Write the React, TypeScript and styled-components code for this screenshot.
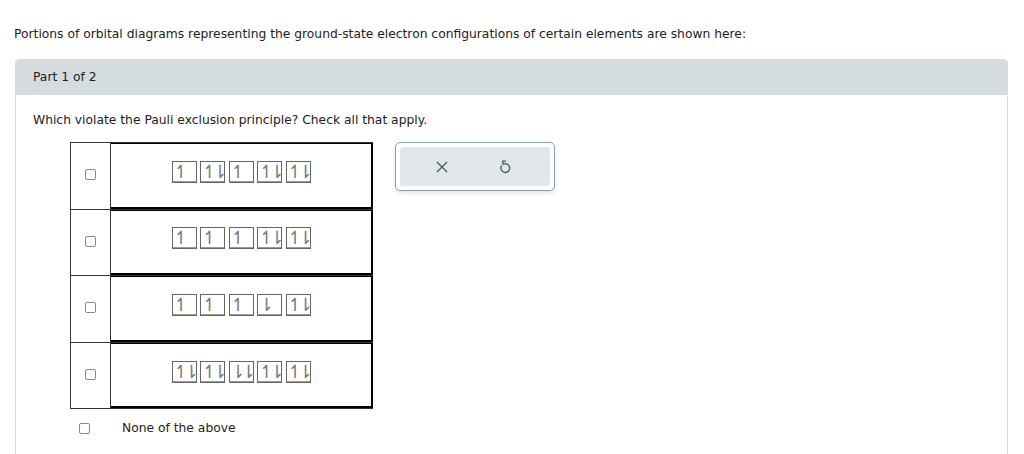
import React from "react";
import styled, { createGlobalStyle } from "styled-components";

const Global = createGlobalStyle`
  html, body { margin: 0; padding: 0; background: #fff; }
  body { font-family: "DejaVu Sans", Verdana, sans-serif; color: #222; }
`;

const Page = styled.div`
  width: 1024px;
  height: 454px;
  overflow: hidden;
  box-sizing: border-box;
  padding: 26px 16px 0 15px;
`;

const Intro = styled.p`
  margin: 0 0 0 -1px;
  font-size: 12.3px;
  line-height: 16px;
  color: #222;
`;

const Panel = styled.section`
  margin-top: 17px;
  border-left: 1px solid #d5dce0;
  border-right: 1px solid #d5dce0;
  border-radius: 4px 4px 0 0;
  height: 400px;
`;

const PanelHeader = styled.div`
  background: #d5dce0;
  height: 36px;
  display: flex;
  align-items: center;
  padding-left: 17px;
  font-size: 12.3px;
  border-radius: 4px 4px 0 0;
`;

const Question = styled.p`
  margin: 17px 0 0 17px;
  font-size: 12.3px;
  line-height: 16px;
`;

const Body = styled.div`
  display: flex;
  align-items: flex-start;
  gap: 22px;
  margin: 14px 0 0 54px;
`;

const Choices = styled.div`
  display: flex;
  flex-direction: column;
`;

const Table = styled.div`
  width: 302px;
  border-left: 1px solid #333;
  border-bottom: 1px solid #333;
`;

const Row = styled.div`
  display: flex;
  height: 65.6px;
  border-top: 1px solid #333;
`;

const CheckCell = styled.div`
  width: 39px;
  border-right: 1px solid #333;
  display: flex;
  align-items: center;
  justify-content: center;
  padding-bottom: 2px;
`;

const Box = styled.span`
  width: 9px;
  height: 9px;
  border: 1px solid #888;
  border-radius: 2px;
  background: #fff;
  display: inline-block;
`;

const DiagramCell = styled.div`
  flex: 1;
  border: 2px solid #000;
  border-left: none;
  border-top-width: 1px;
  display: flex;
  align-items: center;
  justify-content: center;
  gap: 3.5px;
  padding-bottom: 7px;
`;

const Orbital = styled.span`
  width: 22px;
  height: 20px;
  border: 1px solid #666;
  box-shadow: inset 0 -1px 0 #999;
  display: flex;
  align-items: center;
  justify-content: flex-start;
  padding-left: 1px;
  font-family: "DejaVu Sans", sans-serif;
  font-size: 18px;
  letter-spacing: -4.5px;
  color: #7a7a7a;
  line-height: 1;
  overflow: hidden;
`;

const NoneRow = styled.label`
  display: flex;
  align-items: center;
  height: 34px;
  font-size: 12.3px;
  margin-top: 2px;
`;

const NoneBox = styled(Box)`
  margin: 0 32px 0 9px;
`;

const Tools = styled.div`
  width: 160px;
  height: 49px;
  box-sizing: border-box;
  border: 1px solid #8aa0ab;
  border-radius: 5px;
  padding: 4px;
  box-shadow: 0 2px 4px rgba(0, 0, 0, 0.12);
`;

const ToolInner = styled.div`
  height: 100%;
  background: #e1e6e9;
  border-radius: 3px;
  display: flex;
  align-items: center;
  justify-content: space-around;
  padding: 0 14px 0 10px;
`;

const ToolButton = styled.button`
  border: none;
  background: transparent;
  padding: 0;
  display: flex;
  color: #3d5866;
`;

const UP = "\u21BF";
const DN = "\u21C2";

const diagrams: string[][] = [
  [UP, UP + DN, UP, UP + DN, UP + DN],
  [UP, UP, UP, UP + DN, UP + DN],
  [UP, UP, UP, DN, UP + DN],
  [UP + DN, UP + DN, DN + DN, UP + DN, UP + DN],
];

export default function App() {
  return (
    <Page>
      <Global />
      <Intro>
        Portions of orbital diagrams representing the ground-state electron configurations of certain elements are shown here:
      </Intro>
      <Panel>
        <PanelHeader>Part 1 of 2</PanelHeader>
        <Question>Which violate the Pauli exclusion principle? Check all that apply.</Question>
        <Body>
          <Choices>
            <Table>
              {diagrams.map((d, i) => (
                <Row key={i}>
                  <CheckCell>
                    <Box />
                  </CheckCell>
                  <DiagramCell>
                    {d.map((o, j) => (
                      <Orbital key={j}>{o}</Orbital>
                    ))}
                  </DiagramCell>
                </Row>
              ))}
            </Table>
            <NoneRow>
              <NoneBox />
              None of the above
            </NoneRow>
          </Choices>
          <Tools>
            <ToolInner>
              <ToolButton aria-label="clear">
                <svg width="12" height="12" viewBox="0 0 12 12" fill="none" stroke="currentColor" strokeWidth="1.3">
                  <path d="M1 1 L11 11 M11 1 L1 11" />
                </svg>
              </ToolButton>
              <ToolButton aria-label="undo">
                <svg width="12" height="14" viewBox="0 0 12 14" fill="none" stroke="currentColor" strokeWidth="1.3" strokeLinecap="round" strokeLinejoin="round">
                  <path d="M4.2 4.2 A4.4 4.4 0 1 1 2.4 6" />
                  <path d="M6.5 1.2 L3.4 1.2 L4.2 4.2" />
                </svg>
              </ToolButton>
            </ToolInner>
          </Tools>
        </Body>
      </Panel>
    </Page>
  );
}
